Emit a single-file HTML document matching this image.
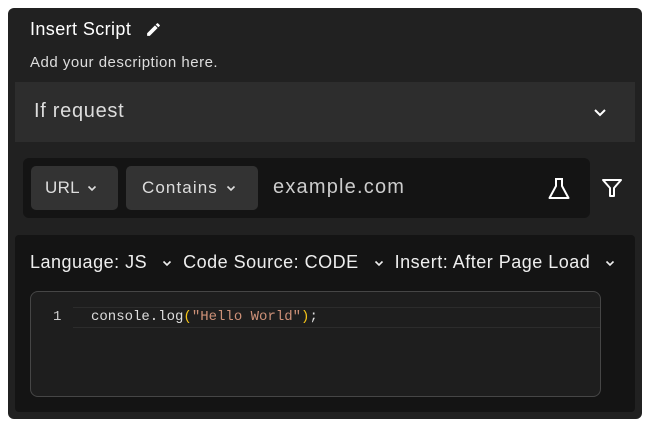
<!DOCTYPE html>
<html><head><meta charset="utf-8"><style>
*{margin:0;padding:0;box-sizing:border-box}
body{width:650px;height:427px;background:#fff;font-family:"Liberation Sans",sans-serif;position:relative;overflow:hidden;color:#fff}
.a{position:absolute}
.card{left:8px;top:8px;width:634px;height:411px;background:#212121;border-radius:6px}
.chev{display:inline-block;vertical-align:middle}
</style></head><body>
<div class="a card"></div>
<div class="a" style="left:30px;top:19px;font-size:18px;letter-spacing:0.4px;color:#fff">Insert Script</div>
<svg class="a" style="left:145px;top:21px" width="17" height="17" viewBox="0 0 24 24"><path fill="#fff" d="M3 17.25V21h3.75L17.81 9.94l-3.75-3.75L3 17.25zM20.71 7.04a1 1 0 000-1.41l-2.34-2.34a1 1 0 00-1.41 0l-1.83 1.83 3.75 3.75 1.83-1.83z"/></svg>
<div class="a" style="left:30px;top:54px;font-size:15px;letter-spacing:0.5px;color:#ddd">Add your description here.</div>
<div class="a" style="left:15px;top:82px;width:620px;height:60px;background:#2d2d2d"></div>
<div class="a" style="left:34px;top:100px;font-size:20px;letter-spacing:0.7px;color:#ddd">If request</div>
<svg class="a" style="left:592px;top:104px" width="16" height="16" viewBox="0 0 16 16"><path d="M3 6l5 5 5-5" stroke="#fff" stroke-width="2" fill="none"/></svg>
<div class="a" style="left:23px;top:158px;width:567px;height:60px;background:#141414;border-radius:6px"></div>
<div class="a" style="left:31px;top:166px;width:87px;height:44px;background:#333;border-radius:5px"></div>
<div class="a" style="left:45px;top:178px;font-size:17px;letter-spacing:0.3px;color:#ddd">URL</div>
<svg class="a" style="left:86px;top:182px" width="12" height="12" viewBox="0 0 12 12"><path d="M2.5 4.5l3.5 3.5 3.5-3.5" stroke="#ddd" stroke-width="1.6" fill="none"/></svg>
<div class="a" style="left:126px;top:166px;width:132px;height:44px;background:#333;border-radius:5px"></div>
<div class="a" style="left:142px;top:178px;font-size:17px;letter-spacing:1.1px;color:#ddd">Contains</div>
<svg class="a" style="left:225px;top:182px" width="12" height="12" viewBox="0 0 12 12"><path d="M2.5 4.5l3.5 3.5 3.5-3.5" stroke="#ddd" stroke-width="1.6" fill="none"/></svg>
<div class="a" style="left:273px;top:176px;font-size:20px;letter-spacing:1.2px;color:#ccc">example.com</div>
<svg class="a" style="left:546px;top:176px" width="26" height="26" viewBox="0 0 26 26"><path d="M9 3h8M10 3v7L3.5 22h19L16 10V3" stroke="#fff" stroke-width="2" fill="none" stroke-linejoin="round"/></svg>
<svg class="a" style="left:601px;top:177px" width="22" height="22" viewBox="0 0 22 22"><path d="M2 3h18l-7 8v8h-4v-8z" stroke="#fff" stroke-width="2" fill="none" stroke-linejoin="round"/></svg>
<div class="a" style="left:15px;top:235px;width:620px;height:177px;background:#141414;border-radius:4px"></div>
<div class="a" style="left:30px;top:252px;font-size:18px;letter-spacing:0.5px;color:#eee;white-space:nowrap">Language: JS<svg class="chev" width="12" height="12" viewBox="0 0 12 12" style="margin:0 10px 0 14px"><path d="M2.5 4.5l3.5 3.5 3.5-3.5" stroke="#eee" stroke-width="1.6" fill="none"/></svg>Code Source: CODE<svg class="chev" width="12" height="12" viewBox="0 0 12 12" style="margin:0 10px 0 14px"><path d="M2.5 4.5l3.5 3.5 3.5-3.5" stroke="#eee" stroke-width="1.6" fill="none"/></svg>Insert: After Page Load<svg class="chev" width="12" height="12" viewBox="0 0 12 12" style="margin:0 0 0 14px"><path d="M2.5 4.5l3.5 3.5 3.5-3.5" stroke="#eee" stroke-width="1.6" fill="none"/></svg></div>
<div class="a" style="left:30px;top:291px;width:571px;height:106px;background:#1e1e1e;border:1px solid #464646;border-radius:8px;overflow:hidden">
<div class="a" style="left:42px;top:15px;width:540px;height:21px;border-top:1px solid #2c2c2c;border-bottom:1px solid #2c2c2c"></div>
<div class="a" style="left:22px;top:17px;font-family:'Liberation Mono',monospace;font-size:14px;color:#ccc">1</div>
<div class="a" style="left:60px;top:17px;font-family:'Liberation Mono',monospace;font-size:14px;color:#ddd;white-space:pre">console.log<span style="color:#f5c518">(</span><span style="color:#ce9178">"Hello World"</span><span style="color:#f5c518">)</span>;</div>
</div>
</body></html>
